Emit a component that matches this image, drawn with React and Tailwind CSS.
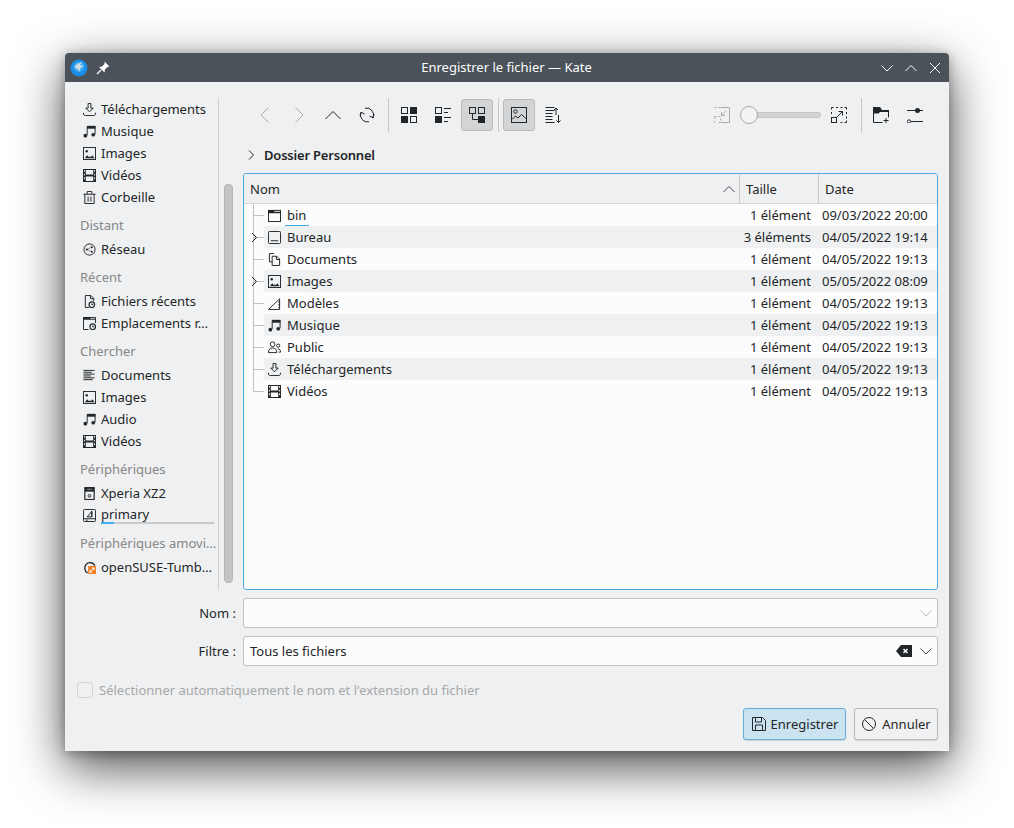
import React from "react";

// icons drawn by hand to match Breeze, 14 box for lists, 16 box for toolbars
const small = {
  download: (
    <>
      <path d="M5.500.5h3v5H11L7 9.500 3 5.500h2.500z" />
      <path d="M.5 10.500c0 2 .5 3 2 3h9c1.500 0 2-1 2-3" />
    </>
  ),
  music: (
    <>
      <path d="M4.500 11V1.500h8.500V10" />
      <path d="M4.500 1h9v3h-9z" fill="currentColor" stroke="none" />
      <circle cx="2.500" cy="11.500" r="2" fill="currentColor" stroke="none" />
      <circle cx="11" cy="10.500" r="2" fill="currentColor" stroke="none" />
    </>
  ),
  image: (
    <>
      <rect x=".5" y=".5" width="13" height="13" />
      <circle cx="4" cy="4.500" r="1.300" fill="currentColor" stroke="none" />
      <path d="M2 12l2.500-3 2 2 1-1 1 1 1.500-2 2.500 3z" fill="currentColor" stroke="none" />
    </>
  ),
  film: (
    <path
      fillRule="evenodd"
      fill="currentColor"
      stroke="none"
      d="M0 0h14v14H0zM3 1v5h8V1zM3 8v5h8V8zM1 1v2h1V1zM1 5v2h1V5zM1 9v2h1V9zM12 1v2h1V1zM12 5v2h1V5zM12 9v2h1V9z"
    />
  ),
  trash: <path d="M.5 3.500h13M4.500 3.500v-3h5v3M2 3.500v10h10v-10M5.500 6v5.500M8.500 6v5.500" />,
  network: (
    <>
      <circle cx="7" cy="7" r="6" />
      <circle cx="4" cy="7" r="1.100" fill="currentColor" stroke="none" />
      <circle cx="9.500" cy="4.500" r="1.100" fill="currentColor" stroke="none" />
      <circle cx="9.500" cy="9.500" r="1.100" fill="currentColor" stroke="none" />
      <path d="M4 7l5.500-2.500M4 7l5.500 2.500" strokeWidth=".5" />
    </>
  ),
  recent: (
    <>
      <path d="M6.500 13.500h-4V.5h6l3 3v3" />
      <path d="M8 .5v3.500h3.500" />
      <circle cx="9.500" cy="10.500" r="3" strokeWidth="1.300" />
      <path d="M9.500 9v1.500h1.500" />
    </>
  ),
  recentFolder: (
    <>
      <path d="M6 13.500H.5V.5h13v6" />
      <path d="M0 0h7l1.500 2H14v1H0z" fill="currentColor" stroke="none" />
      <circle cx="10.500" cy="10.500" r="3" strokeWidth="1.300" />
      <path d="M10.500 9v1.500H12" />
    </>
  ),
  lines: <path d="M.5 1.500h12M.5 3.500h9M.5 5.500h12M.5 7.500h8M.5 9.500h12M.5 11.500h10" />,
  phone: (
    <>
      <rect x="2" y=".5" width="10" height="13" strokeWidth="1.300" />
      <path d="M2 1h10v4H2z" fill="currentColor" stroke="none" />
      <path d="M4.500 2.500h5" stroke="#8d8f91" />
      <circle cx="7" cy="9.500" r="1.500" />
    </>
  ),
  disk: (
    <>
      <rect x=".5" y=".5" width="13" height="13" rx="1" />
      <path d="M.5 10.500h13M9.500 2.500L4.500 8.500h5zM9.500 2.500v6M3 12h2" />
    </>
  ),
  usb: (
    <>
      <path d="M5 12.800A5.800 5.800 0 1 1 12.800 5" strokeWidth="1.400" />
      <rect x="5.500" y="5.500" width="8.500" height="8.500" rx=".5" fill="#f47e1f" stroke="none" />
      <path d="M7.500 12L12 7.500M9.500 7.500H12V10M7.500 9.500V12H10" stroke="#fff" />
    </>
  ),
  folder: (
    <>
      <rect x=".5" y="1.500" width="13" height="12" />
      <path d="M0 1h6l1 2h7v1.500H0z" fill="currentColor" stroke="none" />
    </>
  ),
  desktop: (
    <>
      <rect x=".5" y=".5" width="13" height="13" rx="1" />
      <path d="M3 10.500h8" />
    </>
  ),
  docs: (
    <>
      <path d="M4.500 9.500h-3V.5h5" />
      <path d="M4.500 3.500h5l3 3v7h-8z" />
      <path d="M9 3.500v3.500h3.500" />
    </>
  ),
  template: <path d="M.5 13.500L12.500 2v11.500zM12.500 5.500h-1.500M12.500 8.500h-1.500M12.500 11.500h-1.500" />,
  people: (
    <>
      <circle cx="5" cy="3.500" r="2.500" />
      <path d="M.5 12.500c0-3.500 2-5 4.500-5s4.500 1.500 4.500 5z" />
      <circle cx="11" cy="5" r="1.700" />
      <path d="M10.500 8.500c2 0 3 1 3 3.500h-2" />
    </>
  ),
};

const big = {
  back: <path d="M11.500.5L4 8l7.500 7.500" />,
  forward: <path d="M4.500.5L12 8l-7.500 7.500" />,
  up: <path d="M.5 12L8 4.500 15.500 12" />,
  reload: (
    <>
      <path d="M6 1.200A7 7 0 0 1 14 10.800M10 14.800A7 7 0 0 1 2 5.200" />
      <path d="M15 7l-1 3.800-3.500-1.800M1 9l1-3.800 3.500 1.800" />
    </>
  ),
  icons: (
    <>
      <rect x=".5" y=".5" width="6" height="6" />
      <rect x="9" y="0" width="7" height="7" fill="currentColor" stroke="none" />
      <rect x="0" y="9" width="7" height="7" fill="currentColor" stroke="none" />
      <rect x="9.500" y="9.500" width="6" height="6" />
    </>
  ),
  details: (
    <>
      <rect x=".5" y=".5" width="6" height="6" />
      <rect x="0" y="9" width="7" height="7" fill="currentColor" stroke="none" />
      <path d="M9 1.500h7M9 5.500h4M9 10.500h7M9 14.500h4" />
    </>
  ),
  tree: (
    <>
      <rect x=".5" y=".5" width="6" height="6" />
      <rect x="9.500" y=".5" width="6" height="6" />
      <rect x="9" y="9" width="7" height="7" fill="currentColor" stroke="none" />
      <path d="M3.500 6.500v6H9" />
    </>
  ),
  preview: (
    <>
      <rect x=".5" y=".5" width="15" height="15" />
      <circle cx="4.500" cy="4.500" r="1.700" />
      <path d="M1 12.500l3.500-3.500 2.500 2 3.500-3.500 4.500 4" />
    </>
  ),
  sort: <path d="M.5 .5h9M.5 3.500h9M.5 6.500h7M.5 9.500h7M.5 12.500h7M.5 15.500h9M11 8V1M9 3l2-2 2 2M13.500 8v7.500M11.500 13.500l2 2 2-2" />,
  shrink: (
    <>
      <path d="M6.500.5h9v15h-9" />
      <path d="M.5.5h2M4.500.5h2M.5 10v2M.5 14v1.500h2M4.500 15.500h2M.5 9.500h6v6" strokeDasharray="2 2" />
      <path d="M12 4L7.500 8.500M7.500 5v3.500H11" />
    </>
  ),
  expand: (
    <>
      <path d="M.5 2.500v-2h2M5 .5h2M9.500.5h2M13.500.5h2v2M15.500 5v2M15.500 9.500v2M13.500 15.500h2v-2M9.500 15.500h2" />
      <path d="M.5 5v2" />
      <rect x=".5" y="10.500" width="5" height="5" />
      <path d="M6 10l5.500-5.500M7.500 4.500h4v4" />
    </>
  ),
  newFolder: (
    <>
      <path d="M.5 2.500v13h9M15.500 4.500v6" />
      <path d="M0 0h7l2 3h7v2H7L5.500 6.500H0z" fill="currentColor" stroke="none" />
      <path d="M13 11v5M10.500 13.500h5" />
    </>
  ),
  sliders: (
    <>
      <path d="M0 3.500h9M13 3.500h3M4 14.500h12" />
      <circle cx="10.500" cy="3.500" r="2.500" fill="currentColor" stroke="none" />
      <circle cx="2" cy="14.500" r="1.700" />
    </>
  ),
  chevron: <path d="M2.500 5.500L8 11l5.500-5.500" />,
  chevronUp: <path d="M2.500 11L8 5.500l5.500 5.500" />,
  close: <path d="M3 3l10 10M13 3L3 13" />,
  save: (
    <>
      <path d="M1.500 1.500h10l3 3v10h-13z" />
      <path d="M4.500 2v4h6V2M4.500 14v-5h7v5" />
    </>
  ),
  cancel: (
    <>
      <circle cx="8" cy="8" r="6.500" />
      <path d="M3.500 3.500l9 9" />
    </>
  ),
};

const Small = ({ name }) => (
  <svg width="13" height="13" viewBox="0 0 14 14" fill="none" stroke="currentColor" strokeWidth="1.050" className="shrink-0 text-[#232629]">
    {small[name]}
  </svg>
);

const Big = ({ name, className = "text-[#232629]" }) => (
  <svg width="16" height="16" viewBox="0 0 16 16" fill="none" stroke="currentColor" className={`shrink-0 ${className}`}>
    {big[name]}
  </svg>
);

const places = [
  { icon: "download", label: "Téléchargements" },
  { icon: "music", label: "Musique" },
  { icon: "image", label: "Images" },
  { icon: "film", label: "Vidéos" },
  { icon: "trash", label: "Corbeille" },
  { head: "Distant" },
  { icon: "network", label: "Réseau" },
  { head: "Récent" },
  { icon: "recent", label: "Fichiers récents" },
  { icon: "recentFolder", label: "Emplacements r…" },
  { head: "Chercher" },
  { icon: "lines", label: "Documents" },
  { icon: "image", label: "Images" },
  { icon: "music", label: "Audio" },
  { icon: "film", label: "Vidéos" },
  { head: "Périphériques" },
  { icon: "phone", label: "Xperia XZ2" },
  { icon: "disk", label: "primary", bar: true },
  { head: "Périphériques amovi…" },
  { icon: "usb", label: "openSUSE-Tumb…" },
];

const files = [
  { icon: "folder", name: "bin", size: "1 élément", date: "09/03/2022 20:00", line: true },
  { icon: "desktop", name: "Bureau", size: "3 éléments", date: "04/05/2022 19:14", kids: true },
  { icon: "docs", name: "Documents", size: "1 élément", date: "04/05/2022 19:13" },
  { icon: "image", name: "Images", size: "1 élément", date: "05/05/2022 08:09", kids: true },
  { icon: "template", name: "Modèles", size: "1 élément", date: "04/05/2022 19:13" },
  { icon: "music", name: "Musique", size: "1 élément", date: "04/05/2022 19:13" },
  { icon: "people", name: "Public", size: "1 élément", date: "04/05/2022 19:13" },
  { icon: "download", name: "Téléchargements", size: "1 élément", date: "04/05/2022 19:13" },
  { icon: "film", name: "Vidéos", size: "1 élément", date: "04/05/2022 19:13" },
];

const ToolButton = ({ name, active, dim }) => (
  <div
    className={`w-8 h-8 flex items-center justify-center rounded-[3px] border ${
      active ? "bg-[#d3d4d5] border-[#b9babb]" : "border-transparent"
    }`}
  >
    <Big name={name} className={dim ? "text-[#a9abad]" : "text-[#232629]"} />
  </div>
);

const Sep = ({ className }) => <div className={`w-px h-[34px] bg-[#c5c6c8] ${className}`} />;

const Place = ({ item }) => {
  if (item.head) {
    return (
      <div className="h-[22px] mt-[6px] mb-[2px] pl-[15px] pt-[2px] flex items-center text-[#858789] whitespace-nowrap">
        {item.head}
      </div>
    );
  }
  return (
    <div className="h-[22px] pl-[18px] flex items-center gap-[5px] whitespace-nowrap">
      <Small name={item.icon} />
      {item.bar ? (
        <div className="w-[113px] flex flex-col">
          <span className="leading-[18px] -mt-[1px]">{item.label}</span>
          <div className="h-[2px] -mt-[1px] bg-[#c9cacb] flex">
            <div className="w-[13px] bg-[#3daee9]" />
          </div>
        </div>
      ) : (
        <span className="pt-[2px]">{item.label}</span>
      )}
    </div>
  );
};

const FileRow = ({ file, index, last }) => (
  <div className="h-[22px] flex">
    <svg width="20" height="22" viewBox="0 0 20 22" fill="none" className="shrink-0">
      <path d={last ? "M9.500 0v11.500H20" : "M9.500 0v22M9.500 11.500H20"} stroke="#bfc0c2" />
      {file.kids && <path d="M8 7l4.500 4.500L8 16" stroke="#232629" />}
    </svg>
    <div className={`flex-1 flex items-center ${index % 2 ? "bg-[#eff0f1]" : ""}`}>
      <div className="flex-1 flex items-center gap-[6px] pl-[4px]">
        <Small name={file.icon} />
        {file.line ? (
          <span className="border-b border-[#3daee9] pl-[2px] pr-[3px] -ml-[2px] pb-[1px] mt-[2px] leading-[18px]">{file.name}</span>
        ) : (
          <span className="pt-[2px]">{file.name}</span>
        )}
      </div>
      <div className="w-[72px] pt-[2px] text-right whitespace-nowrap">{file.size}</div>
      <div className="w-[126px] pl-[11px] pt-[2px] whitespace-nowrap">{file.date}</div>
    </div>
  </div>
);

const Field = ({ label, value, children }) => (
  <div className="h-[30px] flex items-center">
    <div className="w-[171px] pt-[2px] text-right whitespace-nowrap">{label}</div>
    <div className="ml-[7px] w-[695px] h-full flex items-center pl-[6px] pr-[3px] bg-[#fcfcfc] border border-[#bdbfc0] rounded-[3px]">
      <span className="flex-1 pt-[2px]">{value}</span>
      {children}
    </div>
  </div>
);

export default function App() {
  return (
    <div className="min-h-screen bg-white pt-[53px] pl-[65px] font-['Noto_Sans',sans-serif] text-[13px] text-[#232629]">
      <div className="w-[884px] h-[698px] flex flex-col bg-[#eff0f1] rounded-t-[4px] shadow-[0_16px_50px_rgba(0,0,0,0.7),0_2px_12px_rgba(0,0,0,0.3)]">
        {/* title bar */}
        <div className="h-[29px] shrink-0 flex items-center bg-[#4b5259] rounded-t-[4px] text-[#fcfcfc]">
          <div className="flex-1 flex items-center gap-[7px] pl-[5px]">
            <svg width="18" height="18" viewBox="0 0 18 18">
              <circle cx="9" cy="9" r="8.500" fill="#1b8fe8" />
              <circle cx="9" cy="8" r="5" fill="#3fb0f5" />
              <path d="M3 8.500l5-4 5-1.500-3.500 3 1.500.5 3-.5-3.500 3-1 3.500-2-3-2 .5.500-2.500z" fill="#d7dde0" />
            </svg>
            <svg width="16" height="16" viewBox="0 0 16 16" fill="#fcfcfc">
              <path d="M9.500 1.500l5 5-2 .5-2.500 2.500-.5 3L4 7l3-.5L9.500 4z" />
              <path d="M6 10l-4 4" stroke="#fcfcfc" strokeWidth="1.300" />
            </svg>
          </div>
          <div className="whitespace-nowrap">Enregistrer le fichier — Kate</div>
          <div className="flex-1 flex items-center justify-end gap-2 pr-[6px]">
            <Big name="chevron" className="text-[#fcfcfc]" />
            <Big name="chevronUp" className="text-[#fcfcfc]" />
            <Big name="close" className="text-[#fcfcfc]" />
          </div>
        </div>

        <div className="flex-1 flex flex-col pt-4">
          <div className="h-[492px] flex">
            {/* places */}
            <div className="w-[154px] shrink-0 border-r border-[#cfd0d2]">
              {places.map((item, i) => (
                <Place key={i} item={item} />
              ))}
            </div>
            <div className="w-[9px] h-[399px] mt-[86px] ml-[5px] shrink-0 rounded-[4px] bg-[#c3c4c6] border border-[#b4b5b7]" />

            {/* main */}
            <div className="ml-[10px] w-[695px] flex flex-col">
              <div className="h-[34px] shrink-0 flex items-center pl-[6px] pr-[7px]">
                <div className="flex items-center gap-[2px]">
                  <ToolButton name="back" dim />
                  <ToolButton name="forward" dim />
                  <ToolButton name="up" />
                  <ToolButton name="reload" />
                </div>
                <Sep className="ml-[5px] mr-[4px]" />
                <div className="flex items-center gap-[2px]">
                  <ToolButton name="icons" />
                  <ToolButton name="details" />
                  <ToolButton name="tree" active />
                </div>
                <Sep className="ml-[5px] mr-[4px]" />
                <div className="flex items-center gap-[2px]">
                  <ToolButton name="preview" active />
                  <ToolButton name="sort" />
                </div>
                <div className="ml-auto flex items-center">
                  <ToolButton name="shrink" dim />
                  <div className="ml-[2px] w-[81px] flex items-center">
                    <div className="w-[18px] h-[18px] rounded-full bg-[#f2f3f4] border border-[#a9abad] shrink-0 z-10" />
                    <div className="flex-1 -ml-[2px] h-[6px] rounded-r-[3px] bg-[#d3d4d5] border border-[#c3c4c6]" />
                  </div>
                  <div className="ml-[2px]">
                    <ToolButton name="expand" />
                  </div>
                  <Sep className="ml-[6px] mr-[3px]" />
                  <div className="flex items-center gap-[2px]">
                    <ToolButton name="newFolder" />
                    <ToolButton name="sliders" />
                  </div>
                </div>
              </div>

              <div className="h-[41px] shrink-0 flex items-center gap-[5px] pl-[2px] pt-[5px]">
                <svg width="14" height="14" viewBox="0 0 14 14" fill="none" stroke="#232629">
                  <path d="M4 2.500L8.500 7 4 11.500" />
                </svg>
                <span className="font-semibold tracking-[-0.2px] pt-[2px]">Dossier Personnel</span>
              </div>

              {/* file list */}
              <div className="flex-1 flex flex-col bg-[#fcfcfc] border border-[#4fa8dc] rounded-[3px] overflow-hidden">
                <div className="h-[30px] shrink-0 flex bg-[#eff0f1] border-b border-[#d3d4d6]">
                  <div className="w-[496px] flex items-center pl-[6px] pr-[2px] border-r border-[#c9cacc]">
                    <span className="flex-1 pt-[2px]">Nom</span>
                    <Big name="chevronUp" className="text-[#44484c]" />
                  </div>
                  <div className="w-[79px] flex items-center pl-[6px] pt-[2px] border-r border-[#c9cacc]">Taille</div>
                  <div className="flex-1 flex items-center pl-[6px] pt-[2px]">Date</div>
                </div>
                {files.map((file, i) => (
                  <FileRow key={file.name} file={file} index={i} last={i === files.length - 1} />
                ))}
              </div>
            </div>
          </div>

          {/* form */}
          <div className="mt-2 flex flex-col gap-2">
            <Field label="Nom :">
              <Big name="chevron" className="text-[#b4b6b8]" />
            </Field>
            <Field label="Filtre :" value="Tous les fichiers">
              <svg width="16" height="12" viewBox="0 0 16 12" className="mr-[6px]">
                <path d="M5 0h11v12H5L0 6z" fill="#232629" />
                <path d="M7.500 4l4 4M11.500 4l-4 4" stroke="#fcfcfc" strokeWidth="1.500" />
              </svg>
              <Big name="chevron" className="text-[#44484c]" />
            </Field>
          </div>

          <div className="mt-4 h-4 pl-3 flex items-center gap-[6px] text-[#a6a8aa]">
            <div className="w-4 h-4 rounded-[3px] border border-[#d3d4d6] bg-[#eff0f1]" />
            <span className="pt-[2px]">Sélectionner automatiquement le nom et l'extension du fichier</span>
          </div>

          <div className="mt-[10px] pr-[11px] flex justify-end gap-2">
            <button className="w-[103px] h-8 flex items-center justify-center gap-1 rounded-[3px] bg-[#cbe2f0] border border-[#64aed6] shadow-[0_1px_1px_rgba(0,0,0,0.12)]">
              <Big name="save" />
              <span className="pt-[2px]">Enregistrer</span>
            </button>
            <button className="w-[84px] h-8 flex items-center justify-center gap-[5px] rounded-[3px] bg-[#f0f1f2] border border-[#b9babc] shadow-[0_1px_1px_rgba(0,0,0,0.12)]">
              <Big name="cancel" />
              <span className="pt-[2px]">Annuler</span>
            </button>
          </div>
        </div>
      </div>
    </div>
  );
}
